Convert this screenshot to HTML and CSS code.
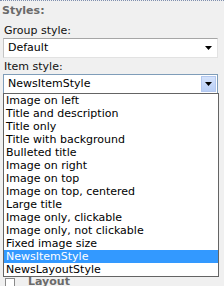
FILE: index.html
```html
<!DOCTYPE html>
<html>
<head>
<meta charset="utf-8">
<link rel="stylesheet" href="styles.css">
</head>
<body>
<div class="pane">
  <div class="title">Styles:</div>
  <div class="label">Group style:</div>
  <div class="select">
    <span class="value">Default</span>
    <span class="btn"><svg width="7" height="4" viewBox="0 0 7 4"><path d="M0 0H7L3.5 4Z" fill="#000"/></svg></span>
  </div>
  <div class="label label-item">Item style:</div>
  <div class="select open">
    <span class="value">NewsItemStyle</span>
    <span class="btn btn-hot"><svg width="7" height="4" viewBox="0 0 7 4"><path d="M0 0H7L3.5 4Z" fill="#000"/></svg></span>
    <ul class="list">
      <li>Image on left</li>
      <li>Title and description</li>
      <li>Title only</li>
      <li>Title with background</li>
      <li>Bulleted title</li>
      <li>Image on right</li>
      <li>Image on top</li>
      <li>Image on top, centered</li>
      <li>Large title</li>
      <li>Image only, clickable</li>
      <li>Image only, not clickable</li>
      <li>Fixed image size</li>
      <li class="sel">NewsItemStyle</li>
      <li>NewsLayoutStyle</li>
    </ul>
  </div>
  <div class="section">
    <span class="expander"></span>
    <span class="section-title">Layout</span>
  </div>
</div>
</body>
</html>
```
FILE: styles.css
```css
html, body {
  margin: 0;
  padding: 0;
}
body {
  width: 224px;
  height: 286px;
  overflow: hidden;
  background: #f0f0f0;
  font-family: "DejaVu Sans", Verdana, sans-serif;
  font-size: 11px;
  color: #000;
}
.pane {
  border-top: 1px dotted #7f8fae;
  padding: 0 6px 0 3px;
}
.title {
  font-weight: bold;
  color: #6a6a6a;
  line-height: 14px;
  margin-top: 3px;
  margin-left: -1px;
}
.label {
  line-height: 14px;
  margin-top: 6px;
  padding-left: 1px;
  color: #111;
}
.label-item {
  margin-top: 2px;
}
.select {
  position: relative;
  height: 18px;
  background: #fff;
  border: 1px solid;
  border-color: #a6a6a6 #e2e2e2 #e2e2e2 #c4c4c4;
  display: flex;
  align-items: center;
}
.select.open {
  border-color: #7f9db9;
}
.value {
  flex: 1;
  padding-left: 4px;
  line-height: 14px;
}
.btn {
  width: 15px;
  height: 16px;
  margin-right: 1px;
  display: flex;
  align-items: center;
  justify-content: center;
}
.btn-hot {
  background: linear-gradient(#d4e2fb, #b9cff6);
  border: 1px solid #b3c8ef;
  box-sizing: border-box;
}
.list {
  position: absolute;
  top: 100%;
  left: -1px;
  right: -2px;
  margin: 0;
  padding: 0;
  list-style: none;
  background: #fff;
  border: 1px solid #646464;
  z-index: 2;
}
.list li {
  height: 13px;
  line-height: 13px;
  padding-left: 2px;
  white-space: nowrap;
}
.list li.sel {
  background: #3399ff;
  color: #fff;
}
.section {
  margin-top: 180px;
  display: flex;
  align-items: flex-start;
  height: 14px;
  padding-left: 2px;
}
.expander {
  width: 8px;
  height: 8px;
  border: 1px solid #8a8a8a;
  background: #fff;
  margin-top: 4px;
}
.section-title {
  margin-left: 13px;
  font-weight: bold;
  color: #6a6a6a;
  line-height: 14px;
  margin-top: 1px;
}
```
